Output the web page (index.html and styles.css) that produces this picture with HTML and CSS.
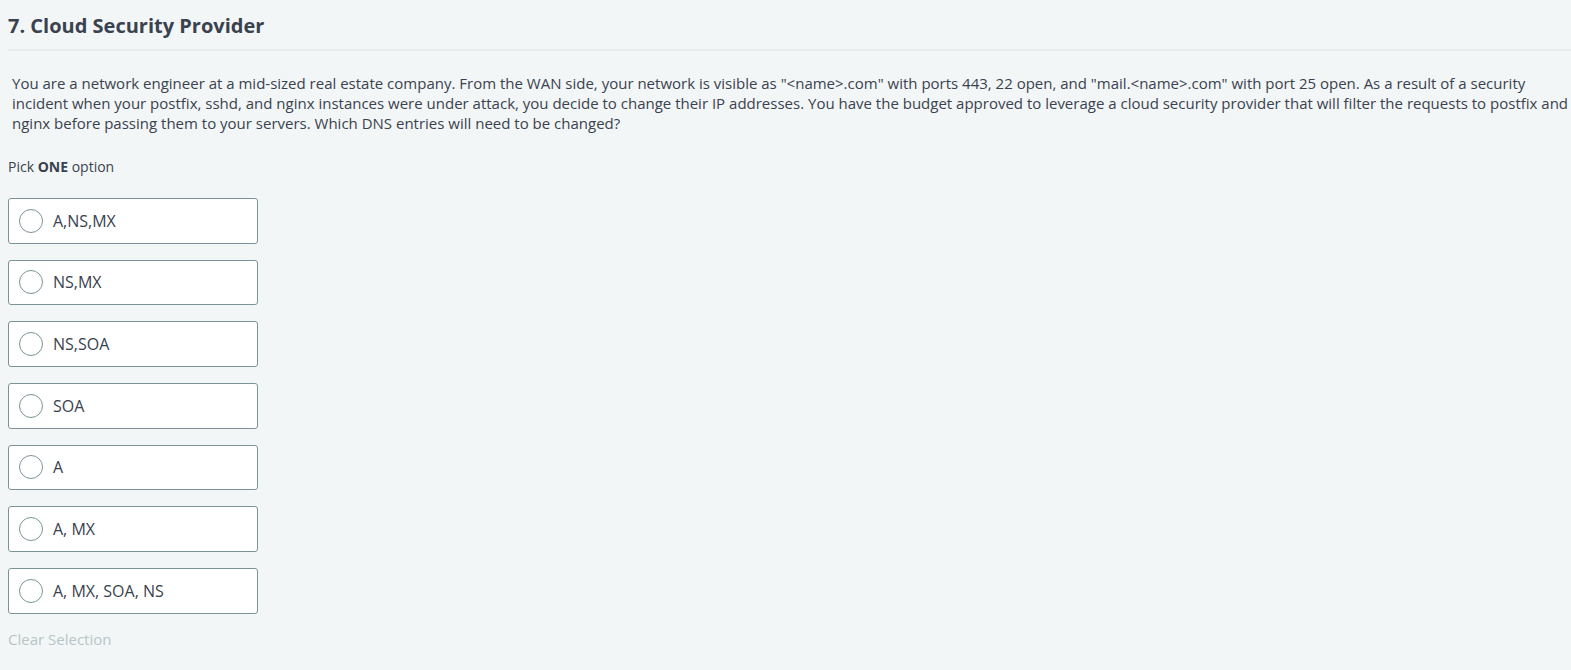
FILE: index.html
```html
<!DOCTYPE html>
<html>
<head>
<meta charset="utf-8">
<link rel="stylesheet" href="styles.css">
</head>
<body>
<div class="page">
  <h1 class="title">7. Cloud Security Provider</h1>
  <p class="question">You are a network engineer at a mid-sized real estate company. From the WAN side, your network is visible as "&lt;name&gt;.com" with ports 443, 22 open, and "mail.&lt;name&gt;.com" with port 25 open. As a result of a security incident when your postfix, sshd, and nginx instances were under attack, you decide to change their IP addresses. You have the budget approved to leverage a cloud security provider that will filter the requests to postfix and nginx before passing them to your servers. Which DNS entries will need to be changed?</p>
  <div class="pick">Pick <b>ONE</b> option</div>
  <div class="options">
    <label class="option"><span class="radio"></span><span class="label">A,NS,MX</span></label>
    <label class="option"><span class="radio"></span><span class="label">NS,MX</span></label>
    <label class="option"><span class="radio"></span><span class="label">NS,SOA</span></label>
    <label class="option"><span class="radio"></span><span class="label">SOA</span></label>
    <label class="option"><span class="radio"></span><span class="label">A</span></label>
    <label class="option"><span class="radio"></span><span class="label">A, MX</span></label>
    <label class="option"><span class="radio"></span><span class="label">A, MX, SOA, NS</span></label>
  </div>
  <div class="clear">Clear Selection</div>
</div>
</body>
</html>
```

FILE: styles.css
```css
html, body {
  margin: 0;
  padding: 0;
  background: #f3f6f7;
}
body {
  font-family: "Open Sans", "Liberation Sans", sans-serif;
  color: #39424e;
}
.page {
  padding: 0 0 0 8px;
}
.title {
  margin: 0;
  font-size: 20px;
  font-weight: 700;
  line-height: 28px;
  padding-top: 12px;
  padding-bottom: 9px;
  border-bottom: 2px solid #e6ecec;
  color: #39424e;
}
.question {
  margin: 22px 0 0 4px;
  font-size: 15px;
  line-height: 20px;
  padding-right: 2px;
}
.pick {
  margin-top: 24px;
  font-size: 14px;
  line-height: 20px;
}
.pick b {
  font-weight: 700;
}
.options {
  margin-top: 21px;
  display: flex;
  flex-direction: column;
  gap: 16px;
}
.option {
  box-sizing: border-box;
  width: 250px;
  height: 45.67px;
  border: 1px solid #7b9299;
  border-radius: 3px;
  background: #fff;
  display: flex;
  align-items: center;
  padding-left: 10px;
  cursor: pointer;
}
.radio {
  box-sizing: border-box;
  width: 24px;
  height: 24px;
  border: 1.5px solid #7b9299;
  border-radius: 50%;
  background: #fff;
  flex: none;
}
.label {
  margin-left: 10px;
  font-size: 16px;
  line-height: 20px;
  color: #39424e;
}
.clear {
  margin-top: 15px;
  font-size: 15px;
  line-height: 20px;
  color: #b7c5c8;
}
```
